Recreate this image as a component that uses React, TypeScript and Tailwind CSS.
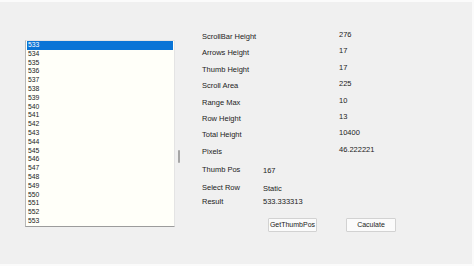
import React from 'react';

const rows = Array.from({ length: 21 }, (_, i) => 533 + i);

const fields: { label: string; value: string }[] = [
  { label: 'ScrollBar Height', value: '276' },
  { label: 'Arrows Height', value: '17' },
  { label: 'Thumb Height', value: '17' },
  { label: 'Scroll Area', value: '225' },
  { label: 'Range Max', value: '10' },
  { label: 'Row Height', value: '13' },
  { label: 'Total Height', value: '10400' },
  { label: 'Pixels', value: '46.222221' },
];

const App: React.FC = () => {
  return (
    <div
      className="w-[474px] h-[266px] bg-[#f0f0f0] border-t-2 border-r-2 border-b-2 border-[#fbfbfb] flex text-[#222] overflow-hidden"
      style={{ fontFamily: '"Liberation Sans", Arial, sans-serif' }}
    >
      {/* list box */}
      <div className="ml-[25px] mt-[38px] w-[150px] h-[187px] bg-[#fffff9] border border-t-[#e4e4e4] border-l-[#b8b8b8] border-r-[#e4e4e4] border-b-[#9c9c9c] px-[1px] text-[6.8px] leading-[8.8px]">
        {rows.map((n, i) => (
          <div
            key={n}
            className={`h-[8.8px] pl-[1px] ${i === 0 ? 'bg-[#0a74d6] text-white' : ''}`}
          >
            {n}
          </div>
        ))}
      </div>

      {/* little splitter tick */}
      <div className="ml-[3px] mt-[148px] w-[2px] h-[13px] bg-[#a6a6a6] rounded-[1px]" />

      {/* fields */}
      <div className="ml-[22px] mt-[28px] flex flex-col text-[7.5px] leading-[10px]">
        {fields.map((f) => (
          <div key={f.label} className="flex h-[16.4px]">
            <div className="w-[137px] pt-[2px]">{f.label}</div>
            <div>{f.value}</div>
          </div>
        ))}
        <div className="flex h-[18px] mt-[2px]">
          <div className="w-[61px] pt-[2px]">Thumb Pos</div>
          <div className="pt-[3px]">167</div>
        </div>
        <div className="flex h-[14px]">
          <div className="w-[61px] pt-[2px]">Select Row</div>
          <div className="pt-[3px]">Static</div>
        </div>
        <div className="flex h-[15px]">
          <div className="w-[61px] pt-[2px]">Result</div>
          <div className="pt-[2px]">533.333313</div>
        </div>
        <div className="flex mt-[8px] ml-[66px] gap-[29px] text-[7px]">
          <button className="w-[49px] h-[14px] bg-[#fbfbfb] border border-[#d2d2d2] rounded-[1px] flex items-center justify-center">
            GetThumbPos
          </button>
          <button className="w-[50px] h-[14px] bg-[#fbfbfb] border border-[#d2d2d2] rounded-[1px] flex items-center justify-center">
            Caculate
          </button>
        </div>
      </div>
    </div>
  );
};

export default App;
